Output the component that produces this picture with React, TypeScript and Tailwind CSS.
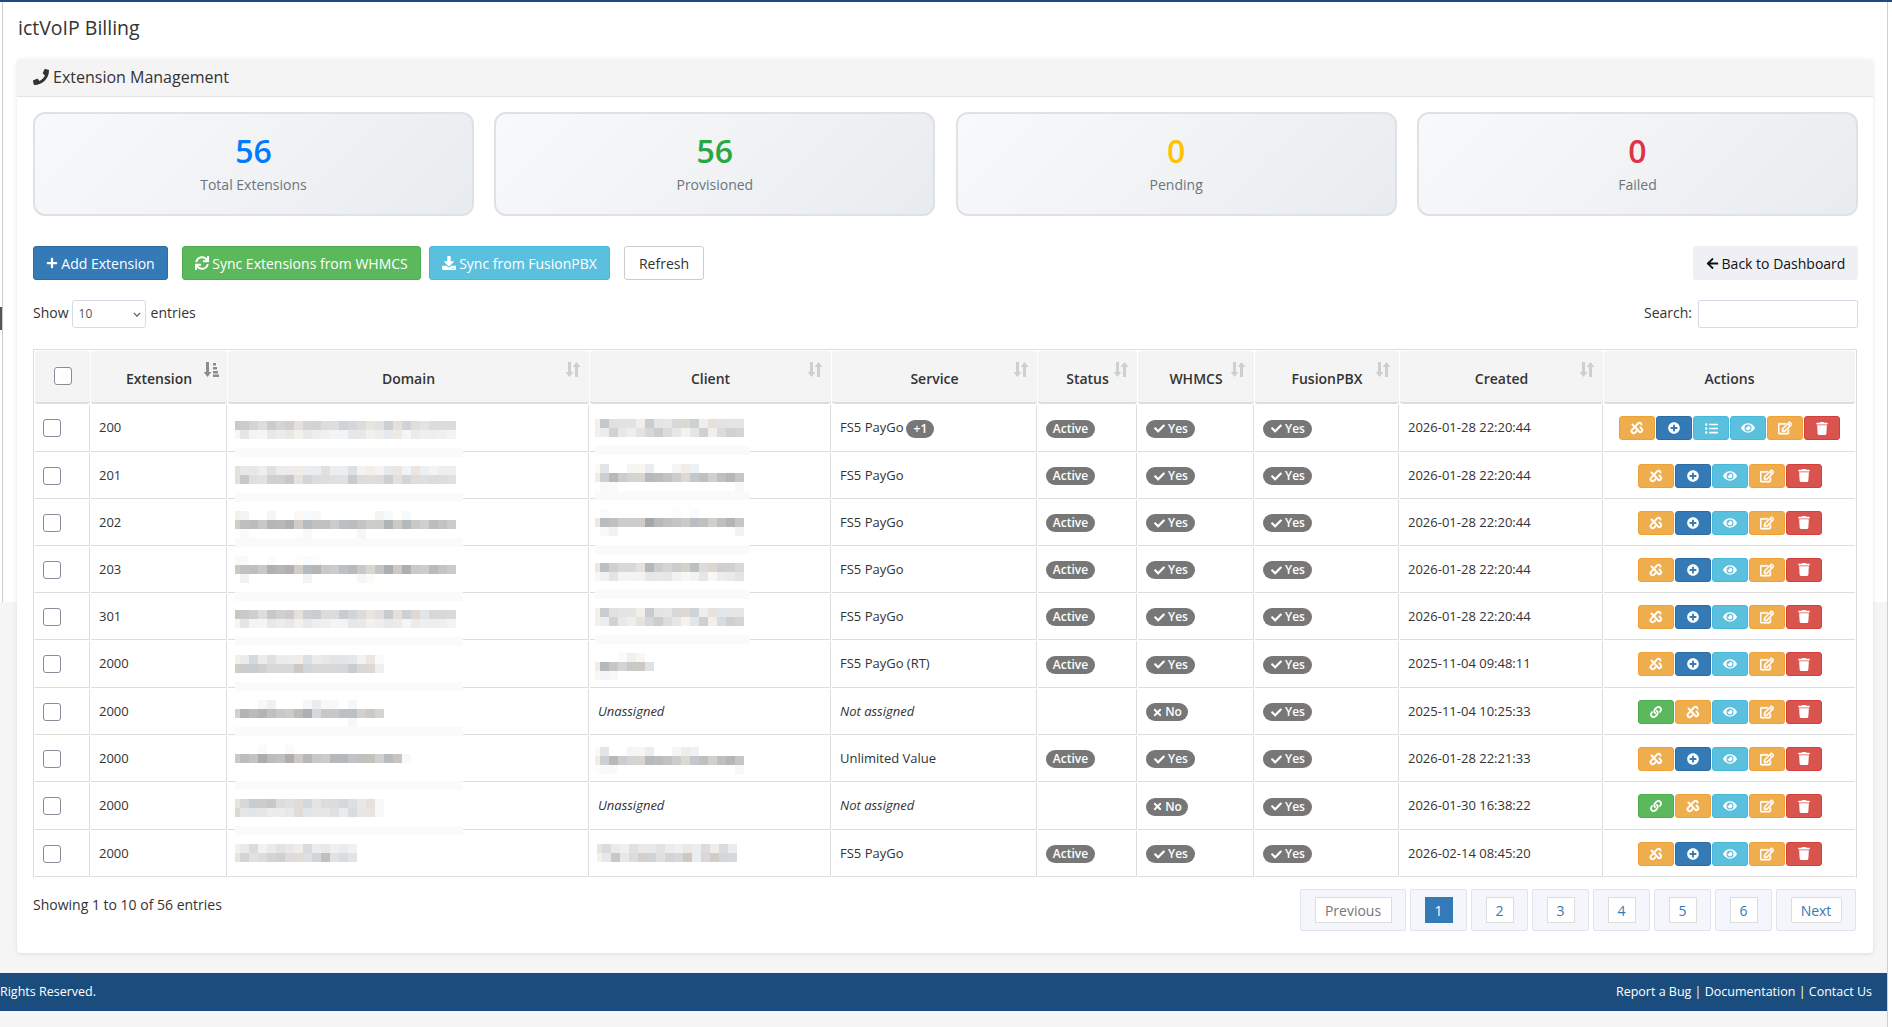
import React from "react";
import {
  FaPhone, FaPlus, FaSync, FaDownload, FaArrowLeft, FaCheck, FaTimes, FaPlusCircle,
  FaListUl, FaEye, FaRegEdit, FaTrash, FaLink,
} from "react-icons/fa";

const UnlinkIcon = () => (
  <svg viewBox="0 0 14 14" className="w-[14px] h-[14px]" fill="none" stroke="currentColor" strokeWidth="2" strokeLinecap="round">
    <path d="M2.5 3.5 L9.5 11 a2 2 0 0 0 2.6 -2.6 L10.5 6.5" />
    <path d="M11.5 3.5 a2 2 0 0 0 -3 -1.5 L2.2 8.6 a2 2 0 0 0 2.9 3 L6.4 10.2" />
  </svg>
);

const SortIcon = ({ active }: { active?: boolean }) =>
  active ? (
    <svg viewBox="0 0 16 15" className="w-[16px] h-[15px] text-[#8c8c8c]" fill="currentColor">
      <path d="M3 0h3v10h2.4L4.5 15 .6 10H3z" />
      <path d="M10 1h3v2.4h-3zM10 5h4v2.4h-4zM10 9h5v2.4h-5zM10 12.6h6V15h-6z" />
    </svg>
  ) : (
    <svg viewBox="0 0 16 15" className="w-[16px] h-[15px] text-[#cfcfcf]" fill="currentColor">
      <path d="M3 0h3v10h2.4L4.5 15 .6 10H3z" />
      <path d="M10 15h3V5h2.4L11.5 0 7.6 5H10z" />
    </svg>
  );

type BandDef = [number, number, string];
const DX = 235;
const CX = 595;
const bands: BandDef[] = [
  [DX, 421, "c8 cc d5 dd cc d5 cf e0 d5 d3 dd dd d3 d8 dc e4 e2 d0 e0 d3 dd e5 dc dc dc"],
  [DX, 430, "f5 e5 f5 f5 e8 ec e8 f0 ea ee f0 f4 f4 e8 e8 f0 ee ea ea f6 ea f0 ee f0 f4"],
  [DX, 466, "e0 e8 e8 ee e0 ec ec ec ee ec e0 ee ee e0 f2 ee f4 ea e6 f4 e6 f0 f4 ee ee"],
  [DX, 475, "e0 c8 e0 e2 d0 d0 c8 e2 d5 dc dd e0 e2 cc dc dc dc d0 e0 d6 dd e0 dc dd e0"],
  [DX, 511, "f0 f4 -- -- f5 -- -- f8 fa f8 -- -- -- -- -- -- f4 fa -- fa"],
  [DX, 520, "cc bf bd c8 b5 b8 b0 cc bb c0 c0 cc c0 bd c4 cc cc b4 c9 b9 c8 d0 bd c3 cb"],
  [DX, 529, "-- fa -- -- -- -- -- -- fa -- -- -- -- -- f6"],
  [DX, 556, "f8 fa -- -- fc -- -- fc fc fc"],
  [DX, 565, "c8 c0 c0 c8 b0 b5 b0 cc b9 b5 c8 cc c0 ba c9 d5 c4 ae c8 b0 c8 cd ba c4 cb"],
  [DX, 574, "-- f2 -- -- -- -- -- -- f5 -- -- -- -- -- f6 fa"],
  [DX, 610, "c6 ca d0 dd c8 d0 cc e0 d0 cc dc dc cc d5 dc e4 e0 cc e0 d0 d8 e5 d8 d8 da"],
  [DX, 619, "f5 e5 f5 f5 e8 ec e8 f0 ea ee f0 f4 f4 e8 e8 f0 ee ea ea f6 ea f0 ee f0 f4"],
  [DX, 655, "f0 ec da ec e0 ec ec ec e0 ec e8 e4 e6 e8 f2 e6 fa"],
  [DX, 664, "cc cc cc d0 d8 d8 d8 c8 d6 d8 d8 d8 d8 cc d8 d8 f0"],
  [DX, 700, "-- -- -- f8 f0 -- -- -- f8 ec f8 f8 -- f8"],
  [DX, 709, "d0 b4 bc b4 c0 c8 cc bc b0 d8 c8 c8 c0 c0 d0 c8 d4"],
  [DX, 718, "-- -- -- -- -- -- -- -- -- -- -- -- -- f8"],
  [DX, 745, "-- -- -- fa -- -- fa"],
  [DX, 754, "c8 bc c4 ac bc c0 ae c8 b8 c8 cc b8 b8 c4 c0 c0 d0 bc c4 fa"],
  [DX, 799, "e4 d8 cc cc c8 dc e0 dc d8 e4 dc dc d8 e0 e8 e0 f8"],
  [DX, 808, "d8 e6 e6 e6 ec ec e8 dc e6 e6 e6 e0 ec dc e6 e4 f8"],
  [DX, 844, "f0 ea dc f2 ea e2 e8 ec dc ec e8 f0 ec f2"],
  [DX, 853, "e4 d4 e2 dc d4 d0 dc dc e0 d4 c0 e2 dc e4"],
  [CX, 419, "f0 c8 e0 e2 e2 ee cc e4 e6 d8 d8 d0 ee e0 e4 e4 e4"],
  [CX, 428, "f0 ee d2 e8 ee e2 d8 cd dc e6 f2 e6 d0 ee dc d0 d4"],
  [CX, 464, "f8 e6 -- -- f5 f5 ee -- -- f5 ec f2"],
  [CX, 473, "ec d0 b8 cc d4 d4 ba bc c2 cc d8 c8 c0 cf c0 b6 c6"],
  [CX, 482, "-- fa fa -- -- -- -- -- -- -- -- -- -- -- -- -- f8"],
  [CX, 509, "-- fc -- -- -- -- -- -- -- fc -- fc"],
  [CX, 518, "e8 bc c0 cc cc cc a8 b8 c0 c4 c9 be c0 cf c0 b4 c6"],
  [CX, 527, "-- fa f2 -- -- -- -- -- -- -- -- -- -- -- -- -- f2"],
  [CX, 563, "e8 c0 d0 d8 d8 e0 b8 cc d4 cc d0 c0 dc d6 d0 d0 d8"],
  [CX, 572, "f6 f2 e4 f4 f4 f2 e8 e8 e6 f2 f6 f4 e6 f6 ee ea e4"],
  [CX, 608, "f0 cc e2 e4 e4 ee cc e4 e6 d8 d8 d4 ee e2 e6 e6 e6"],
  [CX, 617, "f0 ee d2 e8 ee e2 d8 cd dc e6 f2 e6 d0 ee dc d0 d4"],
  [CX, 653, "-- -- -- fa f0 f6"],
  [CX, 662, "ec b8 c6 d4 c8 c8 e2"],
  [CX, 671, "f6 f6 f8"],
  [CX, 747, "f8 e6 -- -- f5 f5 ee -- -- f5 ec f2"],
  [CX, 756, "ec d0 b8 cc d4 d4 ba bc c2 cc d8 c8 c0 cf c0 b6 c6"],
  [CX, 765, "fc fa fa -- -- -- -- -- -- -- -- -- -- -- -- -- f8"],
  [597, 844, "e4 dc ea f0 e0 e8 ea e2 ec f0 e8 ee dc ec dc ec"],
  [597, 853, "f0 e8 c8 e8 dc d0 d4 e0 d4 d8 c8 ee d8 cc d8 d8"],
];
const strips: [number, number, number][] = [
  [DX, 448, 228], [DX, 493, 228], [DX, 538, 228], [DX, 592, 228], [DX, 637, 228],
  [DX, 682, 228], [DX, 727, 228], [DX, 781, 228], [DX, 826, 228],
  [CX, 446, 155], [CX, 491, 155], [CX, 545, 155], [CX, 590, 155], [CX, 635, 155],
];
const domainWarm = [0, 7, 15, 18, 20];
const domainCool = [2, 8, 12, 13, 17, 19, 21];
const clientWarm = [0, 5, 10, 13];
const clientCool = [1, 6, 11, 14];
const OX = 33;
const OY = 349;

function Mosaic() {
  const rects: React.ReactElement[] = [];
  strips.forEach(([x, y, w], i) => {
    rects.push(<rect key={"s" + i} x={x - OX} y={y - OY} width={w} height={9} fill="#fafafa" />);
  });
  bands.forEach(([x0, y, s], bi) => {
    const isDomain = x0 === DX;
    s.split(" ").forEach((v, i) => {
      if (v === "--") return;
      const g = parseInt(v, 16);
      const warm = (isDomain ? domainWarm : clientWarm).includes(i);
      const cool = (isDomain ? domainCool : clientCool).includes(i);
      const strong = x0 === CX && i === 0;
      const r = Math.min(255, g + (strong ? 7 : warm ? 4 : cool ? -4 : 0));
      const b = Math.min(255, g + (strong ? -9 : warm ? -4 : cool ? 3 : 0));
      const x = i === 0 ? x0 : x0 + 5 + (i - 1) * 9;
      rects.push(
        <rect key={bi + "-" + i} x={x - OX} y={y - OY} width={i === 0 ? 5 : 9} height={9} fill={`rgb(${r},${g},${b})`} />
      );
    });
  });
  return (
    <svg className="absolute left-0 top-0 pointer-events-none" width={1824} height={530} shapeRendering="crispEdges">
      {rects}
    </svg>
  );
}

const colCls = ["w-[55px]", "w-[136px]", "w-[361px]", "w-[241px]", "w-[205px]", "w-[99px]", "w-[116px]", "w-[144px]", "w-[203px]", "w-[251px]"];
const heads = ["", "Extension", "Domain", "Client", "Service", "Status", "WHMCS", "FusionPBX", "Created", "Actions"];

type Act = "unlink" | "plus" | "list" | "eye" | "edit" | "trash" | "link";
const N: Act[] = ["unlink", "plus", "eye", "edit", "trash"];
const U: Act[] = ["link", "unlink", "eye", "edit", "trash"];

const acts: Record<Act, { cls: string; icon: React.ReactNode }> = {
  unlink: { cls: "bg-[#f0ad4e] border-[#eea236]", icon: <UnlinkIcon /> },
  plus: { cls: "bg-[#337ab7] border-[#2e6da4]", icon: <FaPlusCircle className="w-[12px] h-[12px]" /> },
  list: { cls: "bg-[#5bc0de] border-[#46b8da]", icon: <FaListUl className="w-[13px] h-[13px]" /> },
  eye: { cls: "bg-[#5bc0de] border-[#46b8da]", icon: <FaEye className="w-[14px] h-[14px]" /> },
  edit: { cls: "bg-[#f0ad4e] border-[#eea236]", icon: <FaRegEdit className="w-[14px] h-[14px]" stroke="currentColor" strokeWidth={24} /> },
  trash: { cls: "bg-[#d9534f] border-[#d43f3a]", icon: <FaTrash className="w-[12px] h-[13px]" /> },
  link: { cls: "bg-[#5cb85c] border-[#4cae4c]", icon: <FaLink className="w-[12px] h-[12px]" /> },
};

type Row = {
  ext: string; service: string; extra?: boolean; italic?: boolean; client?: string;
  active: boolean; whmcs: boolean; created: string; actions: Act[]; h: string;
};
const rows: Row[] = [
  { ext: "200", service: "FS5 PayGo", extra: true, active: true, whmcs: true, created: "2026-01-28 22:20:44", actions: ["unlink", "plus", "list", "eye", "edit", "trash"], h: "h-[47px]" },
  { ext: "201", service: "FS5 PayGo", active: true, whmcs: true, created: "2026-01-28 22:20:44", actions: N, h: "h-[46px]" },
  { ext: "202", service: "FS5 PayGo", active: true, whmcs: true, created: "2026-01-28 22:20:44", actions: N, h: "h-[46px]" },
  { ext: "203", service: "FS5 PayGo", active: true, whmcs: true, created: "2026-01-28 22:20:44", actions: N, h: "h-[46px]" },
  { ext: "301", service: "FS5 PayGo", active: true, whmcs: true, created: "2026-01-28 22:20:44", actions: N, h: "h-[46px]" },
  { ext: "2000", service: "FS5 PayGo (RT)", active: true, whmcs: true, created: "2025-11-04 09:48:11", actions: N, h: "h-[47px]" },
  { ext: "2000", service: "Not assigned", italic: true, client: "Unassigned", active: false, whmcs: false, created: "2025-11-04 10:25:33", actions: U, h: "h-[46px]" },
  { ext: "2000", service: "Unlimited Value", active: true, whmcs: true, created: "2026-01-28 22:21:33", actions: N, h: "h-[46px]" },
  { ext: "2000", service: "Not assigned", italic: true, client: "Unassigned", active: false, whmcs: false, created: "2026-01-30 16:38:22", actions: U, h: "h-[47px]" },
  { ext: "2000", service: "FS5 PayGo", active: true, whmcs: true, created: "2026-02-14 08:45:20", actions: N, h: "h-[46px]" },
];

const Badge = ({ children, w }: { children: React.ReactNode; w: string }) => (
  <span className={`inline-flex items-center justify-center gap-[2px] h-[18px] rounded-[9px] bg-[#777777] text-white text-[12px] font-semibold leading-none align-middle ${w}`}>
    {children}
  </span>
);

const YesBadge = () => (
  <Badge w="w-[49px]"><FaCheck className="w-[13px] h-[11px]" />Yes</Badge>
);

const Checkbox = () => (
  <input type="checkbox" className="appearance-none block w-[18px] h-[18px] border border-[#8d8a9c] rounded-[3px] bg-white" />
);

function App() {
  const statCards = [
    { n: "56", l: "Total Extensions", c: "text-[#007bff]" },
    { n: "56", l: "Provisioned", c: "text-[#28a745]" },
    { n: "0", l: "Pending", c: "text-[#ffc107]" },
    { n: "0", l: "Failed", c: "text-[#dc3545]" },
  ];
  const tdCls = "border-r-[1.5px] border-b-[1.5px] border-[#dddddd] px-[8px] text-[13px] text-[#333] align-middle last:border-r-0";
  return (
    <div className="relative w-[1892px] h-[1027px] overflow-hidden bg-white font-['Open_Sans',sans-serif] text-[14px] text-[#333333]">
      <div className="h-[2px] bg-[#1a4d7e]" />
      <div className="absolute left-[2px] top-[2px] h-[600px] w-[1px] bg-[#cccccc]" />
      <div className="absolute left-0 top-[307px] h-[23px] w-[2px] bg-[#555555]" />
      <div className="w-[1888px] h-[1025px] border-r border-[#cfcfcf] bg-[linear-gradient(#ffffff_600px,#f5f5f5_600px)] flex flex-col">
        <div className="h-[57px] pl-[18px] flex items-center text-[19.5px] text-[#333] pb-[5px]">ictVoIP Billing</div>
        <div className="ml-[17px] mr-[14px] h-[894px] bg-white rounded-[4px] shadow-[0_1px_4px_rgba(0,0,0,0.1)] flex flex-col shrink-0">
          <div className="h-[38px] bg-[#f4f4f4] border-b border-[#e3e3e3] rounded-t-[4px] flex items-center pl-[16px] pb-[2px] gap-[4px] text-[16px] text-[#333]">
            <FaPhone className="w-[16px] h-[16px] -scale-x-100 -rotate-90" />
            <span>Extension Management</span>
          </div>
          <div className="pl-[16px] pr-[15px] pt-[15px] flex flex-col">
            <div className="flex justify-between">
              {statCards.map((s) => (
                <div key={s.l} className="w-[441px] h-[104px] rounded-[12px] border-2 border-[#dee2e6] bg-[linear-gradient(135deg,#f8f9fa,#e9ecef)] flex flex-col items-center">
                  <div className={`mt-[15px] text-[32px] leading-[44px] font-semibold ${s.c}`}>{s.n}</div>
                  <div className="mt-[2px] text-[14px] leading-[20px] text-[#6c757d]">{s.l}</div>
                </div>
              ))}
            </div>
            <div className="mt-[30px] flex h-[34px] text-[14px]">
              <button className="w-[135px] rounded-[3px] border border-[#2e6da4] bg-[#337ab7] text-white flex items-center justify-center gap-[3px]"><FaPlus className="w-[12px] h-[12px]" />Add Extension</button>
              <button className="ml-[14px] w-[239px] rounded-[3px] border border-[#4cae4c] bg-[#5cb85c] text-white flex items-center justify-center gap-[3px]"><FaSync className="w-[14px] h-[14px]" />Sync Extensions from WHMCS</button>
              <button className="ml-[8px] w-[181px] rounded-[3px] border border-[#46b8da] bg-[#5bc0de] text-white flex items-center justify-center gap-[3px]"><FaDownload className="w-[14px] h-[14px]" />Sync from FusionPBX</button>
              <button className="ml-[14px] w-[80px] rounded-[3px] border border-[#cccccc] bg-white text-[#333]">Refresh</button>
              <button className="ml-auto w-[165px] rounded-[3px] bg-[#eef0f3] text-[#111] flex items-center justify-center gap-[3px]"><FaArrowLeft className="w-[13px] h-[13px]" />Back to Dashboard</button>
            </div>
            <div className="mt-[20px] flex items-start h-[28px] text-[14px] leading-[26px]">
              <span>Show</span>
              <span className="relative ml-[3px] mr-[5px] block h-[28px]">
                <select defaultValue="10" className="appearance-none block w-[74px] h-[28px] rounded-[3px] border border-[#d5dbe6] bg-white pl-[6px] text-[12px] text-[#555]">
                  <option>10</option>
                </select>
                <svg viewBox="0 0 10 6" className="absolute right-[5px] top-[12px] w-[8px] h-[5px] pointer-events-none" fill="none" stroke="#555" strokeWidth="1.4">
                  <path d="M1 1l4 4 4-4" />
                </svg>
              </span>
              <span>entries</span>
              <span className="ml-auto mr-[6px]">Search:</span>
              <input className="w-[160px] h-[28px] rounded-[2px] border border-[#d5dbe6] bg-white" />
            </div>
            <div className="relative mt-[21px]">
              <table className="table-fixed w-[1824px] border-separate border-spacing-[1px] border border-[#dddddd] border-b-0">
                <colgroup>
                  {colCls.map((c, i) => <col key={i} className={c} />)}
                </colgroup>
                <thead>
                  <tr>
                    {heads.map((h, i) => (
                      <th key={i} className="relative h-[53px] bg-[#f4f4f4] rounded-[3px] border-b-2 border-[#dddddd] text-[14px] font-semibold text-[#333] text-center pt-[3px]">
                        {i === 0 ? (
                          <div className="flex justify-center -mt-[5px]"><Checkbox /></div>
                        ) : h}
                        {i > 0 && i < 9 && (
                          <span className="absolute right-[8px] top-[11px]"><SortIcon active={i === 1} /></span>
                        )}
                      </th>
                    ))}
                  </tr>
                </thead>
                <tbody>
                  {rows.map((r, i) => (
                    <tr key={i} className={r.h}>
                      <td className={tdCls}><Checkbox /></td>
                      <td className={tdCls}>{r.ext}</td>
                      <td className={tdCls}></td>
                      <td className={`${tdCls} italic`}>{r.client}</td>
                      <td className={`${tdCls} ${r.italic ? "italic" : ""}`}>
                        {r.service}
                        {r.extra && <span className="ml-[3px]"><Badge w="w-[28px]">+1</Badge></span>}
                      </td>
                      <td className={tdCls}>{r.active && <Badge w="w-[49px]">Active</Badge>}</td>
                      <td className={tdCls}>
                        {r.whmcs ? <YesBadge /> : <Badge w="w-[42px]"><FaTimes className="w-[11px] h-[11px]" />No</Badge>}
                      </td>
                      <td className={tdCls}><YesBadge /></td>
                      <td className={tdCls}>{r.created}</td>
                      <td className={tdCls}>
                        <div className="flex justify-center gap-[1px]">
                          {r.actions.map((a, j) => (
                            <span key={j} className={`w-[36px] h-[24px] rounded-[3px] border flex items-center justify-center text-white ${acts[a].cls}`}>
                              {acts[a].icon}
                            </span>
                          ))}
                        </div>
                      </td>
                    </tr>
                  ))}
                </tbody>
              </table>
              <Mosaic />
            </div>
            <div className="mt-[11px] flex items-start justify-between">
              <div className="mt-[6px] text-[14px] leading-[20px]">Showing 1 to 10 of 56 entries</div>
              <div className="flex gap-[4px] mr-[2px]">
                {["Previous", "1", "2", "3", "4", "5", "6", "Next"].map((p) => (
                  <div key={p} className="h-[42px] px-[13.5px] rounded-[2px] border border-[#dfe4ee] bg-[#f4f6fb] flex items-center">
                    <span className={`h-[26px] flex items-center justify-center border text-[14px] ${p === "1" ? "w-[28px] bg-[#337ab7] border-[#337ab7] text-white" : p === "Previous" ? "w-[77px] bg-white border-[#dddddd] text-[#777777]" : p === "Next" ? "w-[51px] bg-white border-[#dddddd] text-[#337ab7] rounded-[2px]" : "w-[28px] bg-white border-[#dddddd] text-[#337ab7]"}`}>{p}</span>
                  </div>
                ))}
              </div>
            </div>
          </div>
        </div>
        <div className="mt-[20px] h-[38px] shrink-0 bg-[#1a4d7e] text-white text-[12.5px] flex items-center justify-between pr-[15px]">
          <span>Rights Reserved.</span>
          <span>Report a Bug | Documentation | Contact Us</span>
        </div>
      </div>
    </div>
  );
}

export default App;
